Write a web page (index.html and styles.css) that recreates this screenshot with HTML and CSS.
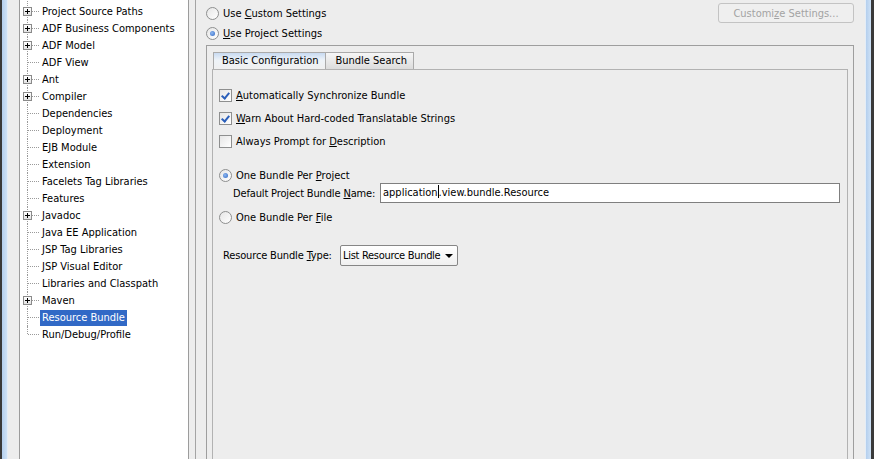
FILE: index.html
```html
<!DOCTYPE html>
<html lang="en">
<head>
    <meta charset="UTF-8">
    <title>Project Properties - Resource Bundle</title>
    <link rel="stylesheet" href="styles.css">
</head>
<body>
    <div class="window">
        <div class="frame frame-left"></div>

        <div class="content">
            <!-- Category tree -->
            <div class="tree">
                <ul class="tree-list">
                    <li class="has-children"><span class="expander"></span>Project Source Paths</li>
                    <li class="has-children"><span class="expander"></span>ADF Business Components</li>
                    <li class="has-children"><span class="expander"></span>ADF Model</li>
                    <li>ADF View</li>
                    <li class="has-children"><span class="expander"></span>Ant</li>
                    <li class="has-children"><span class="expander"></span>Compiler</li>
                    <li>Dependencies</li>
                    <li>Deployment</li>
                    <li>EJB Module</li>
                    <li>Extension</li>
                    <li>Facelets Tag Libraries</li>
                    <li>Features</li>
                    <li class="has-children"><span class="expander"></span>Javadoc</li>
                    <li>Java EE Application</li>
                    <li>JSP Tag Libraries</li>
                    <li>JSP Visual Editor</li>
                    <li>Libraries and Classpath</li>
                    <li class="has-children"><span class="expander"></span>Maven</li>
                    <li><span class="selected">Resource Bundle</span></li>
                    <li>Run/Debug/Profile</li>
                </ul>
            </div>

            <div class="splitter"></div>

            <!-- Settings pane -->
            <div class="settings">
                <div class="top-row">
                    <label class="option"><span class="radio"></span><span>Use <u>C</u>ustom Settings</span></label>
                    <button class="btn" disabled>Customi<u>z</u>e Settings...</button>
                </div>
                <div class="second-row">
                    <label class="option"><span class="radio checked"></span><span><u>U</u>se Project Settings</span></label>
                </div>

                <div class="group">
                    <div class="tabs">
                        <div class="tab active">Basic Configuration</div>
                        <div class="tab">Bundle Search</div>
                    </div>
                    <div class="tab-panel">
                        <label class="option check-row first"><span class="checkbox checked"></span><span><u>A</u>utomatically Synchronize Bundle</span></label>
                        <label class="option check-row"><span class="checkbox checked"></span><span><u>W</u>arn About Hard-coded Translatable Strings</span></label>
                        <label class="option check-row"><span class="checkbox"></span><span>Always Prompt for <u>D</u>escription</span></label>

                        <label class="option radio-row project"><span class="radio checked"></span><span>One Bundle Per <u>P</u>roject</span></label>
                        <div class="name-row">
                            <span class="field-label">Default Project Bundle <u>N</u>ame:</span>
                            <div class="text-field">application<span class="caret"></span>.view.bundle.Resource</div>
                        </div>
                        <label class="option radio-row file"><span class="radio"></span><span>One Bundle Per <u>F</u>ile</span></label>

                        <div class="type-row">
                            <span class="field-label">Resource Bundle <u>T</u>ype:</span>
                            <div class="combo">List Resource Bundle<span class="arrow"></span></div>
                        </div>
                    </div>
                </div>
            </div>
        </div>

        <div class="frame frame-right"></div>
    </div>
</body>
</html>
```

FILE: styles.css
```css
body {
    margin: 0;
    background-color: #ededed;
    font-family: "DejaVu Sans Condensed", "DejaVu Sans", sans-serif;
    font-stretch: semi-condensed;
    font-size: 11px;
    color: #000;
    overflow: hidden;
}

u {
    text-decoration: underline;
    text-underline-offset: 1px;
}

.window {
    display: flex;
    width: 874px;
    height: 459px;
    overflow: hidden;
}

.frame {
    flex: none;
    width: 5px;
    background: linear-gradient(90deg, #b4cfee, #cfe2f6);
}

.frame-left {
    border-left: 2px solid #3a3a3a;
    border-right: 1px solid #e4edf7;
}

.frame-right {
    border-left: 1px solid #e4edf7;
    border-right: 3px solid #3a3a3a;
}

.content {
    flex: 1;
    min-width: 0;
    display: flex;
    padding-left: 11px;
}

/* tree */

.tree {
    flex: none;
    width: 170px;
    box-sizing: border-box;
    background: #fff;
    border-left: 1px solid #9c9c9c;
    border-right: 1px solid #9c9c9c;
    padding-top: 3px;
}

.tree-list {
    list-style: none;
    margin: 0;
    padding: 0;
}

.tree-list li {
    position: relative;
    height: 17px;
    line-height: 17px;
    padding-left: 22px;
    white-space: nowrap;
}

.tree-list li::before {
    content: "";
    position: absolute;
    left: 7px;
    top: 0;
    bottom: 0;
    border-left: 1px dotted #9a9a9a;
}

.tree-list li:first-child::before {
    top: -4px;
}

.tree-list li:last-child::before {
    bottom: 9px;
}

.tree-list li::after {
    content: "";
    position: absolute;
    left: 8px;
    top: 8px;
    width: 11px;
    border-top: 1px dotted #9a9a9a;
}

.expander {
    position: absolute;
    left: 3px;
    top: 4px;
    width: 7px;
    height: 7px;
    border: 1px solid #8a8a8a;
    background: linear-gradient(#ffffff, #e2e2e2);
    z-index: 1;
}

.expander::before,
.expander::after {
    content: "";
    position: absolute;
    background: #000;
}

.expander::before {
    left: 1px;
    top: 3px;
    width: 5px;
    height: 1px;
}

.expander::after {
    left: 3px;
    top: 1px;
    width: 1px;
    height: 5px;
}

.selected {
    display: inline-block;
    margin-left: -2px;
    padding: 0 2px;
    background: #3169c6;
    color: #fff;
    line-height: 16px;
}

.splitter {
    flex: none;
    width: 1px;
    margin-left: 6px;
    background: #a4a4a4;
}

/* settings pane */

.settings {
    flex: 1;
    min-width: 0;
    padding: 0 11px 0 10px;
}

.top-row {
    display: flex;
    justify-content: space-between;
    align-items: center;
    height: 20px;
    margin-top: 3px;
}

.second-row {
    display: flex;
    align-items: center;
    height: 18px;
    margin-top: 1px;
}

.option {
    display: flex;
    align-items: center;
    white-space: nowrap;
}

.radio,
.checkbox {
    flex: none;
    position: relative;
    width: 11px;
    height: 11px;
    border: 1px solid #8e8f8f;
    background: linear-gradient(135deg, #e6e6e6, #ffffff);
    margin-right: 4px;
}

.radio {
    border-radius: 50%;
}

.radio.checked::after {
    content: "";
    position: absolute;
    left: 3px;
    top: 3px;
    width: 5px;
    height: 5px;
    border-radius: 50%;
    background: radial-gradient(circle at 40% 40%, #8fb8f0, #2d66c4);
}

.checkbox.checked::after {
    content: "";
    position: absolute;
    left: 3px;
    top: 1px;
    width: 3px;
    height: 6px;
    border: solid #2b5fba;
    border-width: 0 2px 2px 0;
    transform: rotate(40deg);
}

.btn {
    height: 20px;
    width: 136px;
    padding: 0;
    font: inherit;
    color: #a3a3a3;
    background: #efefef;
    border: 1px solid #c3c3c3;
    border-radius: 3px;
}

.group {
    margin-top: 3px;
    height: 420px;
    border: 1px solid #9e9e9e;
    padding: 6px 5px 0 5px;
}

.tabs {
    display: flex;
    margin-left: 1px;
}

.tab {
    height: 16px;
    line-height: 16px;
    white-space: nowrap;
    border: 1px solid #aaaaaa;
    border-bottom: none;
    background: linear-gradient(#f6f6f6, #dcdcdc);
    padding: 0 6px 0 9px;
}

.tab.active {
    background: linear-gradient(#c8daf1, #eef3f8 45%, #f0f0f0);
    border-right: none;
    padding: 0 7px 0 8px;
}

.tab-panel {
    height: 400px;
    border: 1px solid #b2b2b2;
    padding: 0 6px;
}

.check-row {
    height: 18px;
    margin-top: 5px;
}

.check-row.first {
    margin-top: 16px;
}

.radio-row {
    height: 17px;
}

.radio-row.project {
    margin-top: 17px;
}

.radio-row.file {
    height: 18px;
    margin-top: 5px;
}

.name-row {
    display: flex;
    align-items: center;
    height: 20px;
    margin-top: -1px;
    padding-left: 14px;
}

.field-label {
    letter-spacing: -0.15px;
}

.name-row .field-label {
    width: 147px;
}

.text-field {
    width: 456px;
    height: 18px;
    line-height: 18px;
    border: 1px solid #7f7f7f;
    background: #fff;
    padding-left: 2px;
    white-space: nowrap;
}

.caret {
    display: inline-block;
    width: 1px;
    height: 13px;
    margin: 0 0 -2px 0;
    background: #000;
}

.type-row {
    display: flex;
    align-items: center;
    height: 21px;
    margin-top: 19px;
    padding-left: 4px;
}

.type-row .field-label {
    width: 117px;
}

.combo {
    position: relative;
    width: 114px;
    height: 19px;
    line-height: 19px;
    border: 1px solid #868686;
    border-radius: 2px;
    background: linear-gradient(#ffffff, #f0f0f0);
    padding-left: 2px;
    letter-spacing: -0.3px;
    white-space: nowrap;
}

.arrow {
    position: absolute;
    right: 4px;
    top: 8px;
    border-left: 4px solid transparent;
    border-right: 4px solid transparent;
    border-top: 4px solid #000;
}
```
